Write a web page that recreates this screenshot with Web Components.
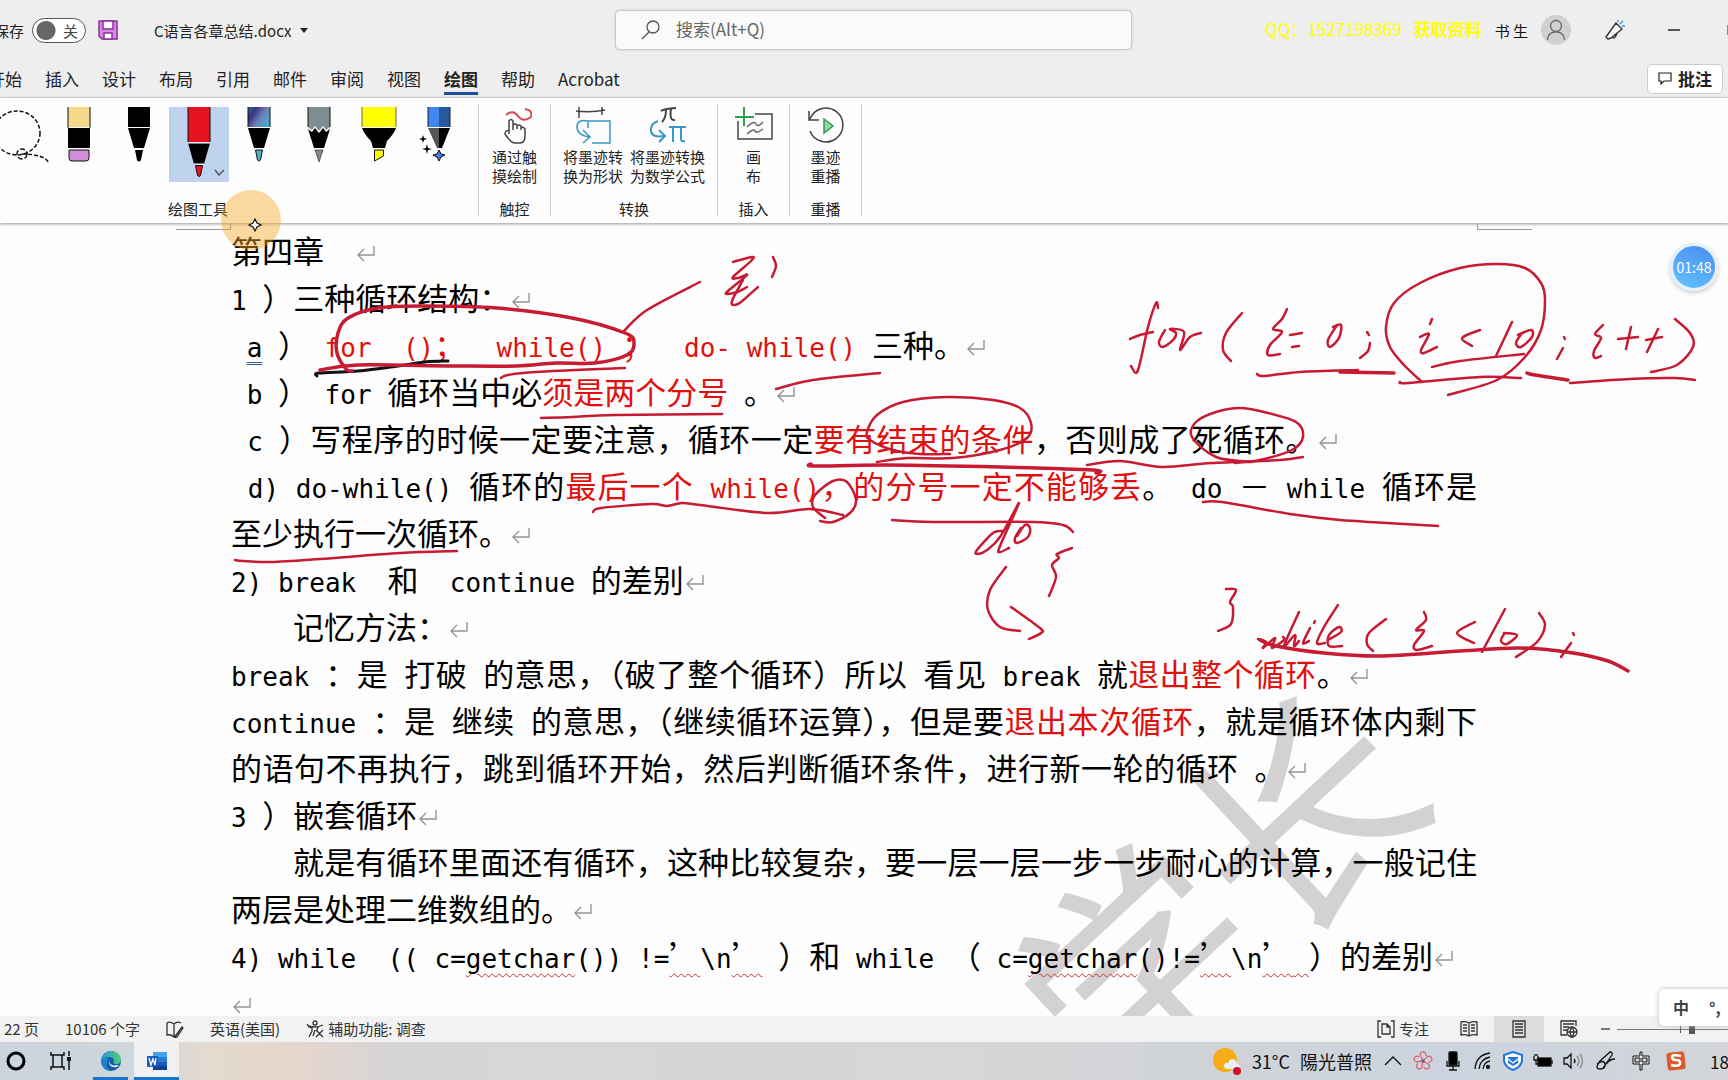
<!DOCTYPE html>
<html lang="zh-CN">
<head>
<meta charset="utf-8">
<title>C语言各章总结.docx</title>
<style>
  body {
    margin: 0;
    font-family: "Noto Sans CJK SC", sans-serif;
    font-size: 15px;
    color: #222;
    overflow: hidden;
  }
</style>
</head>
<body>
<word-app></word-app>

<script>
// small helper so every component gets an open shadow root the same way
class BaseElement extends HTMLElement {
  constructor() {
    super();
    this.attachShadow({ mode: 'open' });
    this.shadowRoot.innerHTML = this.template();
  }

  template() {
    return '';
  }
}

// top bar: autosave, file name, search, account
class TitleBar extends BaseElement {
  template() {
    return `
      <style>
        :host {
          display: grid;
          grid-template-columns: 615fr 517fr 596fr;
          align-items: center;
          height: 60px;
          flex: none;
          background: #eee;
        }
        .left, .right, .switch, .search { display: flex; align-items: center; }
        .left { margin-left: -6px; white-space: nowrap; }
        .switch { gap: 8px; }
        .switch input {
          appearance: none;
          margin: 0;
          width: 54px;
          height: 25px;
          border: 1px solid #555;
          border-radius: 13px;
          background: radial-gradient(circle at 13px 50%, #666 9px, transparent 10px) #fff;
        }
        .toggle { display: grid; align-items: center; }
        .toggle > * { grid-area: 1 / 1; }
        .toggle span { justify-self: end; padding-right: 8px; color: #444; }
        .save { margin: 0 36px 0 12px; }
        button { border: 0; padding: 0; background: none; font: inherit; color: inherit; display: flex; }
        .file { align-items: center; gap: 9px; font-size: 15px; }
        .search {
          box-sizing: border-box;
          height: 40px;
          padding-left: 25px;
          gap: 16px;
          border: 1px solid #ccc;
          border-radius: 5px;
          background: #fafafa;
          box-shadow: 0 0 2px #bbb;
        }
        .search input {
          flex: 1;
          min-width: 0;
          border: 0;
          padding: 0 0 4px;
          background: none;
          font: 17px "Noto Sans CJK SC", sans-serif;
        }
        .search input::placeholder { color: #666; }
        .right { justify-content: flex-end; white-space: nowrap; }
        .notice { color: #ff0; font-size: 17px; display: flex; gap: 12px; margin-right: 13px; padding-bottom: 3px; }
        .name { font-size: 15px; margin-right: 13px; color: #111; }
        .megaphone { margin: 0 43px 0 34px; }
        .min { margin-right: 47px; }
        .max { width: 1px; height: 10px; background: #888; }
      </style>
      <div class="left">
        <label class="switch">保存
          <span class="toggle"><input type="checkbox"><span>关</span></span>
        </label>
        <button class="save" aria-label="保存文档">
          <svg width="20" height="20" viewBox="0 0 20 20" fill="#d48be0" stroke="#8a2f9c" stroke-width="1.5">
            <path d="M1 1h18v18H4l-3-3z"/><path d="M5 1h10v8H5zM6 13h8v6H6z" fill="#fff"/>
          </svg>
        </button>
        <button class="file">C语言各章总结.docx
          <svg width="8" height="5"><path d="M0 0h8l-4 5z" fill="#222"/></svg>
        </button>
      </div>
      <label class="search">
        <svg width="19" height="20" viewBox="0 0 19 20" fill="none" stroke="#555" stroke-width="1.3">
          <circle cx="12" cy="7" r="6"/><path d="M8 12L1 19"/>
        </svg>
        <input type="search" placeholder="搜索(Alt+Q)" aria-label="搜索">
      </label>
      <div class="right">
        <div class="notice"><span>QQ：1527198369</span><b>获取资料</b></div>
        <span class="name">书 生</span>
        <svg width="30" height="30" viewBox="0 0 30 30" fill="none" stroke="#666" stroke-width="1.3">
          <circle cx="15" cy="15" r="15" fill="#d0d0d0" stroke="none"/>
          <circle cx="15" cy="11" r="5.5"/><path d="M6.500 25c0-11 17-11 17 0"/>
        </svg>
        <button class="megaphone" aria-label="即将推出">
          <svg width="20" height="20" viewBox="0 0 20 20" fill="#fff" stroke="#333" stroke-width="1.4" stroke-linejoin="round">
            <path d="M11 3l6 6-11 9-3 1-2-2zM7 17q3 3 5-4"/>
            <path d="M13 2V0M15 4l3-3M17 6h3" stroke="#2b9ccc"/>
          </svg>
        </button>
        <button class="min" aria-label="最小化"><svg width="12" height="2"><path d="M0 1h12" stroke="#222" stroke-width="1.500"/></svg></button>
        <span class="max"></span>
      </div>
    `;
  }
}

class RibbonTabs extends BaseElement {
  template() {
    const tabs = ['开始', '插入', '设计', '布局', '引用', '邮件', '审阅', '视图', '绘图', '帮助', 'Acrobat'];
    return `
      <style>
        :host {
          display: flex;
          justify-content: space-between;
          align-items: center;
          height: 37px;
          flex: none;
          padding-right: 5px;
          background: #eee;
          border-bottom: 1px solid #d4d4d4;
        }
        nav { display: flex; gap: 23px; margin-left: -12px; }
        nav button {
          border: 0;
          border-bottom: 3px solid transparent;
          padding: 3px 0 0;
          background: none;
          font: 17px/27px "Noto Sans CJK SC", sans-serif;
          color: #222;
        }
        nav button.active { font-weight: bold; border-bottom-color: #1f4e9a; }
        .comments {
          display: flex;
          align-items: center;
          gap: 6px;
          height: 30px;
          padding: 0 10px;
          border: 1px solid #ccc;
          border-radius: 5px;
          background: #fff;
          font: bold 17px "Noto Sans CJK SC", sans-serif;
          color: #222;
        }
      </style>
      <nav>${tabs.map(t => `<button class="${t === '绘图' ? 'active' : ''}">${t}</button>`).join('')}</nav>
      <button class="comments">
        <svg width="14" height="13" viewBox="0 0 14 13" fill="none" stroke="#222" stroke-width="1.2"><path d="M1 1h12v8H6l-3 3V9H1z"/></svg>
        批注
      </button>
    `;
  }
}

// one labelled block of the ribbon
class RibbonGroup extends BaseElement {
  template() {
    return `
      <style>
        :host {
          display: flex;
          flex-direction: column;
          justify-content: space-between;
          box-sizing: border-box;
          width: 72px;
          height: 112px;
          border-right: 1px solid #ccc;
          text-align: center;
        }
        :host([wide]) { width: 167px; }
        :host([pens]) { width: 561px; margin-left: -82px; }
        .content { display: flex; justify-content: center; gap: 7px; padding-top: 3px; }
        :host([pens]) .content { justify-content: flex-end; gap: 0; padding-right: 9px; }
        .label { font-size: 15px; line-height: 15px; }
      </style>
      <div class="content"><slot></slot></div>
      <div class="label"></div>
    `;
  }

  connectedCallback() {
    this.shadowRoot.querySelector('.label').textContent = this.getAttribute('label');
  }
}

class ToolButton extends BaseElement {
  template() {
    return `
      <style>
        :host { display: block; }
        button {
          display: flex;
          flex-direction: column;
          align-items: center;
          gap: 3px;
          border: 0;
          padding: 0;
          background: none;
          font: 15px/19px "Noto Sans CJK SC", sans-serif;
          color: #222;
        }
      </style>
      <button><slot name="icon"></slot><span><slot></slot></span></button>
    `;
  }
}

// pens are all drawn in a 60x75 cell
class PenTools extends BaseElement {
  template() {
    const pens = [
      ['套索', `<g fill="none" stroke="#111" stroke-width="1.500" stroke-dasharray="4 2"><ellipse cx="28" cy="26" rx="23" ry="22"/><path d="M33 47q22 0 27 9"/></g><circle cx="33" cy="47" r="5" fill="none" stroke="#111" stroke-width="1.500" stroke-dasharray="5 2"/>`],
      ['橡皮擦', `<path d="M19 0v20h22V0" fill="#f5d98b"/><path d="M19 21h22v20H19z"/><path d="M20 43h20v8q0 3-3 3H23q-3 0-3-3z" fill="#d08fd8" stroke="#111"/><path d="M19 0v21M41 0v21" stroke="#111"/>`],
      ['黑色笔', `<path d="M19 0h22v20H19zM19 21h22l-6 20H25zM26 43h8l-2 10q-2 3-4 0z"/>`],
      ['红色笔', `<path d="M19 0h22v35H19z" fill="#e51220"/><path d="M19 0v35M41 0v35" stroke="#111"/><path d="M19 36h22l-6 21H25z"/><path d="M19 36h22M25 57h10" stroke="#fff"/><path d="M26.500 58.500h7l-2 10q-1 2-3 0z" fill="#e51220" stroke="#111"/><path d="M46 63l4 5 5-5" fill="none" stroke="#555" stroke-width="1.500"/>`, 'on'],
      ['银河笔', `<defs><linearGradient id="g" x2="1" y2=".6"><stop stop-color="#2c6f96"/><stop offset=".3" stop-color="#3a3380"/><stop offset=".65" stop-color="#6d80b8"/><stop offset="1" stop-color="#4ba6ce"/></linearGradient></defs><path d="M19 0h22v20H19z" fill="url(#g)"/><path d="M19 0v20M41 0v20" stroke="#111"/><path d="M19 21h22l-6 20H25z"/><path d="M26.500 43h7l-2 10q-1 2-3 0z" fill="#4fb5bc" stroke="#111"/>`],
      ['铅笔', `<path d="M19 0h22v20l-4 3-3-4-4 5-4-5-3 4-4-3z" fill="#7f8e92"/><path d="M19 0v20M41 0v20" stroke="#111"/><path d="M19 22l4 3 3-4 4 5 4-5 3 4 4-3-6 19H25z"/><path d="M26 43h8l-4 12z" fill="#888" stroke="#222" stroke-width=".6"/>`],
      ['荧光笔', `<path d="M13 0h34v20H13z" fill="#ff0"/><path d="M13 0v20M47 0v20" stroke="#666"/><path d="M13 21h34q-2 6-9 13l-2 7H24l-2-7q-7-7-9-13z"/><path d="M25.500 43h9v6l-9 5z" fill="#ff0" stroke="#111"/>`],
      ['动作笔', `<path d="M19 0h11v20H19z" fill="#3f86f0"/><path d="M30 0h11v20H30z" fill="#2a589c"/><path d="M19 0v20M41 0v20" stroke="#222"/><path d="M19 21h11v20h-2z" fill="#555"/><path d="M30 21h11l-8 20h-3z"/><path d="M30 43l2 4 4 1-4 2-2 4-2-4-4-2 4-1z" fill="#3f7be0" stroke="#111"/><path d="M14 28l1 3 3 1-3 1-1 3-1-3-3-1 3-1zM18 37l1 4 4 1-4 1-1 4-1-4-4-1 4-1z"/>`]
    ];
    return `
      <style>
        :host { display: flex; }
        button { border: 0; padding: 0; width: 60px; height: 75px; background: none; }
        button.on { background: #c0d3ee; }
        svg { display: block; }
      </style>
      ${pens.map(p => `<button class="${p[2] || ''}" aria-label="${p[0]}"><svg width="60" height="75">${p[1]}</svg></button>`).join('')}
    `;
  }
}

class DrawRibbon extends BaseElement {
  template() {
    return `
      <style>
        :host {
          display: flex;
          flex: none;
          height: 119px;
          padding-top: 6px;
          background: #fdfdfd;
          box-shadow: 0 1px 3px #999;
          position: relative;
          z-index: 1;
        }
        svg { fill: none; stroke: #444; stroke-width: 1.500; }
      </style>
      <ribbon-group pens label="绘图工具"><pen-tools></pen-tools></ribbon-group>
      <ribbon-group label="触控">
        <tool-button>
          <svg slot="icon" width="36" height="37" viewBox="0 0 36 37">
            <path d="M10 8q7-6 12 1t13 1q2-7-6-8" stroke="#d8484e" stroke-width="2"/>
            <path d="M13 27V14q2-3 4 0v9-5q2-2 4 0v4-3q2-2 4 0v4-2q2-2 4 1v7q0 7-5 7h-5q-4 0-10-9 0-4 4-3z"/>
          </svg>通过触<br>摸绘制</tool-button>
      </ribbon-group>
      <ribbon-group wide label="转换">
        <tool-button>
          <svg slot="icon" width="36" height="37" viewBox="0 0 36 37">
            <path d="M1 4q15 2 29-1M4 0v11M27 0v8"/>
            <path d="M13 21V14h22v22H17M13 14Q2 12 2 20t12 10M8 23l7 7-7 6" stroke="#3798c8"/>
          </svg>将墨迹转<br>换为形状</tool-button>
        <tool-button>
          <svg slot="icon" width="38" height="37" viewBox="0 0 38 37">
            <path d="M12 4q2-2 15-3M17 3q0 8-4 12M22 2q-2 12 4 11" stroke-width="2"/>
            <path d="M9 14Q1 17 2 24t13 5M10 23l6 6-6 6M20 20h17M24 20v15M32 20v12q0 3 4 2" stroke="#3798c8" stroke-width="2"/>
          </svg>将墨迹转换<br>为数学公式</tool-button>
      </ribbon-group>
      <ribbon-group label="插入">
        <tool-button>
          <svg slot="icon" width="38" height="37" viewBox="0 0 38 37">
            <path d="M3 14v18h34V7H20"/><path d="M0 10h19M9 0v19" stroke="#2f9e4c" stroke-width="2"/>
            <path d="M12 20q7-7 9-3t7-2M12 27q7-6 8-3t8-2" stroke="#666"/>
          </svg>画<br>布</tool-button>
      </ribbon-group>
      <ribbon-group label="重播">
        <tool-button>
          <svg slot="icon" width="36" height="37" viewBox="0 0 36 37">
            <path d="M2 12a17 17 0 1 1 0 12M1 4v9h10"/><path d="M16 12l9 7-9 7z" fill="#8fdfa5" stroke="#339a55"/>
          </svg>墨迹<br>重播</tool-button>
      </ribbon-group>
    `;
  }
}

// paragraph mark at the end of a line
class ReturnMark extends BaseElement {
  template() {
    return `
      <style>:host { display: inline-block; white-space: normal; line-height: 1; } svg { display: block; }</style>
      <svg width="20" height="18" viewBox="0 0 20 18" fill="none" stroke="#949494" stroke-width="1.400">
        <path d="M19 1v9H3M9 4l-6 6 6 6"/>
      </svg>
    `;
  }
}

class DocPage extends BaseElement {
  template() {
    return `
      <style>
        :host {
          display: block;
          flex: 1;
          min-height: 0;
          overflow: hidden;
          position: relative;
          background: #fdfdfd;
        }
        article {
          position: relative;
          width: 1246px;
          margin-left: 231px;
          padding-top: 3px;
          color: #000;
        }
        article::before, article::after {
          content: "";
          position: absolute;
          top: 0;
          width: 54px;
          height: 6px;
          border-bottom: 1px solid #999;
        }
        article::before { right: 100%; border-right: 1px solid #999; }
        article::after { left: 100%; border-left: 1px solid #999; }
        p {
          margin: 0;
          height: 47px;
          font-size: 31px;
          line-height: 47px;
          white-space: pre-wrap;
        }
        p.full { text-align-last: justify; }
        p.first { text-indent: 2em; }
        code { font: 26px/1 "DejaVu Sans Mono", monospace; }
        em { font-style: normal; color: #e0100f; }
        .spell { text-decoration: underline wavy #c33 1px; text-underline-offset: 5px; }
        .grammar { text-decoration: underline double #2f62a8 1px; text-underline-offset: 5px; }
        .watermark {
          position: absolute;
          left: 1212px;
          top: 660px;
          width: 0;
          height: 0;
          display: flex;
          align-items: center;
          justify-content: center;
          font-size: 224px;
          line-height: 1;
          white-space: nowrap;
          color: #d4d1d3;
          transform: rotate(-43deg);
        }
      </style>
      <div class="watermark">学长</div>
      <article>
        <p>第四章<code>  </code><return-mark></return-mark></p>
        <p><code>1 </code>）三种循环结构：<return-mark></return-mark></p>
        <p><code> <span class="grammar">a</span> </code>）<em><code> for  ()</code>；<code>  while() </code>；<code>  do- while() </code></em>三种。<return-mark></return-mark></p>
        <p><code> b </code>）<code> for </code>循环当中必<em>须是两个分号</em><code> </code>。<return-mark></return-mark></p>
        <p class="full" style="padding-right: 140px"><code> c </code>）写程序的时候一定要注意，循环一定<em>要有结束的条件</em>，否则成了死循环。<return-mark></return-mark></p>
        <p class="full"><code> d) do-while() </code>循环的<em>最后一个<code> while()</code>，的分号一定不能够丢</em>。<code> do </code>－<code> while </code>循环是</p>
        <p>至少执行一次循环。<return-mark></return-mark></p>
        <p><code>2) break  </code>和<code>  continue </code>的差别<return-mark></return-mark></p>
        <p class="first">记忆方法：<return-mark></return-mark></p>
        <p class="full" style="padding-right: 109px"><code>break </code>：是<code> </code>打破<code> </code>的意思，（破了整个循环）所以<code> </code>看见<code> break </code>就<em>退出整个循环</em>。<return-mark></return-mark></p>
        <p class="full"><code>continue </code>：是<code> </code>继续<code> </code>的意思，（继续循环运算），但是要<em>退出本次循环</em>，就是循环体内剩下</p>
        <p class="full" style="padding-right: 171px">的语句不再执行，跳到循环开始，然后判断循环条件，进行新一轮的循环<code> </code>。<return-mark></return-mark></p>
        <p><code>3 </code>）嵌套循环<return-mark></return-mark></p>
        <p class="first full">就是有循环里面还有循环，这种比较复杂，要一层一层一步一步耐心的计算，一般记住</p>
        <p>两层是处理二维数组的。<return-mark></return-mark></p>
        <p><code>4) while  (( c=<span class="spell">getchar</span>()) !=</code><span class="spell">’</span><code>\\n</code><span class="spell">’</span><code> </code>）和<code> while </code>（<code> c=<span class="spell">getchar</span>()!=</code><span class="spell">’</span><code>\\n</code><span class="spell">’<code> </code></span>）的差别<return-mark></return-mark></p>
        <p><return-mark></return-mark></p>
      </article>
      <ink-layer></ink-layer>
    `;
  }
}

// hand drawn strokes over the page, each one is: width, then x,y points
class InkLayer extends BaseElement {
  template() {
    const strokes = [
      // circle and lines around for / while
      [3, 352,371, 346,369, 337,353, 338,333, 348,318, 378,308, 421,306, 497,308, 572,318, 625,333, 634,343, 627,355, 595,363, 556,363, 516,366, 453,366, 358,365, 320,370],
      [2, 501,378, 508,375, 536,372, 625,368],
      [2, 624,331, 647,310, 700,282],
      [2, 541,418, 572,417, 615,415, 722,414],
      [2, 776,389, 813,380, 880,373],
      // 到
      [2, 733,262, 752,257, 751,261, 733,277, 738,278, 747,275, 728,291, 727,294, 737,292, 747,287],
      [2, 743,280, 732,301, 734,305, 741,302, 758,287],
      [2, 773,257, 776,266, 772,277],
      // 结束的条件
      [2, 877,462, 907,458, 953,458, 1000,450, 1027,438, 1031,423, 1020,408, 993,400, 947,397, 903,402, 877,415, 867,432, 870,440, 893,450, 920,454, 950,454],
      [3, 811,464, 815,466, 887,465, 1000,467, 1093,470, 1096,473],
      [2, 1087,465, 1120,461, 1162,467, 1212,463, 1280,460, 1303,457],
      [2, 1252,462, 1216,457, 1192,437, 1196,422, 1216,412, 1240,408, 1264,412, 1296,422, 1303,437, 1292,450, 1260,460, 1235,463],
      [2, 593,512, 601,508, 651,504, 667,506, 682,503, 700,505, 767,513, 810,509, 843,515],
      [2, 825,518, 813,507, 815,495, 833,481, 847,482, 856,500, 850,513, 833,522, 820,521],
      [2, 892,520, 933,522, 1033,522, 1063,525, 1073,532],
      [2, 1203,502, 1222,502, 1290,514, 1340,520, 1438,526],
      [2, 235,560, 243,561, 271,562, 320,559, 400,553, 457,551],
      // do { }
      [2, 1002,531, 993,533, 977,550, 977,554, 987,550, 1000,537, 1019,503, 1000,546, 1000,552, 1009,548],
      [2, 1021,528, 1015,538, 1017,543, 1028,537, 1030,528, 1025,525, 1017,536],
      [2, 1006,567, 990,590, 988,610, 1000,627, 1020,631],
      [2, 1011,607, 1040,628, 1041,633, 1029,639],
      [2, 1072,548, 1057,554, 1059,558, 1052,565, 1056,577, 1049,596],
      [2, 1226,589, 1236,590, 1230,602, 1233,607, 1231,624, 1218,631],
      // for (
      [2, 1158,308, 1156,303, 1148,327, 1140,363, 1136,373, 1131,366],
      [2, 1130,339, 1140,335, 1153,332],
      [2, 1165,330, 1159,342, 1163,347, 1173,340, 1176,333, 1170,329, 1184,332, 1180,350, 1190,337, 1201,333],
      [2, 1242,313, 1226,333, 1223,350, 1231,361],
      // i = 0;
      [2, 1287,309, 1282,319, 1273,329, 1282,332, 1270,345, 1268,355, 1280,354],
      [2, 1290,335, 1302,333],
      [2, 1292,347, 1299,346],
      [2, 1337,325, 1328,340, 1330,347, 1339,338, 1341,325, 1333,327],
      [2, 1367,332, 1369,335],
      [2, 1370,343, 1368,351, 1360,358],
      [2, 1257,374, 1264,376, 1300,372, 1358,370],
      [3, 1340,372, 1394,373],
      // i < 10
      [2, 1448,395, 1497,380, 1525,357, 1541,330, 1545,300, 1541,283, 1525,268, 1497,264, 1460,268, 1420,283, 1394,303, 1386,327, 1390,347, 1404,365, 1422,382],
      [2, 1432,319, 1430,324],
      [2, 1420,337, 1429,334, 1421,350, 1424,353, 1437,347],
      [2, 1480,330, 1462,338, 1472,346],
      [2, 1512,322, 1505,337, 1496,356],
      [2, 1522,333, 1516,343, 1521,347, 1532,337, 1531,330, 1518,335],
      [2, 1432,367, 1460,361, 1524,354],
      [2, 1400,382, 1408,383, 1480,377, 1521,378],
      [3, 1527,373, 1535,375, 1568,380],
      // ; i++)
      [2, 1564,337, 1565,339],
      [2, 1563,348, 1557,359],
      [2, 1603,325, 1595,334, 1601,338, 1594,351, 1595,358, 1601,356],
      [2, 1618,339, 1638,337],
      [2, 1631,327, 1626,349],
      [2, 1646,340, 1662,337],
      [2, 1658,329, 1647,352],
      [2, 1675,319, 1690,333, 1693,347, 1677,365, 1651,372],
      [2, 1570,383, 1630,379, 1675,378, 1695,380],
      // while (i < 10);
      [2, 1258,639, 1266,642, 1263,648, 1275,638, 1272,648, 1284,640, 1283,637],
      [2, 1299,612, 1284,646, 1295,635, 1294,646, 1299,641],
      [2, 1310,628, 1303,643, 1309,641],
      [2, 1315,621, 1314,623],
      [2, 1338,605, 1324,627, 1317,643, 1325,643],
      [2, 1328,640, 1341,632, 1339,627, 1329,635, 1329,646, 1342,646],
      [2, 1386,619, 1369,633, 1367,644, 1373,651],
      [2, 1424,612, 1426,620, 1416,630, 1424,631, 1414,645, 1417,650, 1432,646],
      [2, 1475,622, 1457,633, 1474,643],
      [2, 1505,609, 1482,652],
      [2, 1504,634, 1501,641, 1507,644, 1517,635, 1504,633],
      [2, 1539,613, 1545,625, 1537,642, 1516,657],
      [2, 1573,633, 1574,635],
      [2, 1571,643, 1561,657],
      [3, 1260,640, 1276,646, 1324,653, 1380,656, 1460,651, 1520,648, 1573,653, 1608,661, 1628,671]
    ];
    const black = [3, 317,376, 319,373, 358,371, 398,366, 425,362, 448,361];
    return `
      <style>
        :host { position: absolute; left: 0; top: 0; pointer-events: none; }
        svg { display: block; fill: none; stroke: #c71a33; stroke-linecap: round; stroke-linejoin: round; }
      </style>
      <svg width="1728" height="793" viewBox="0 223 1728 793">
        <path d="${this.smooth(black)}" stroke="#111" stroke-width="3"/>
        ${strokes.map(s => `<path d="${this.smooth(s)}" stroke-width="${s[0] + 0.5}"/>`).join('')}
      </svg>
    `;
  }

  // run a curve through all the points
  smooth(stroke) {
    const pts = [];
    for (let i = 1; i < stroke.length; i += 2) {
      pts.push([stroke[i], stroke[i + 1]]);
    }
    let d = 'M' + pts[0].join(' ');
    for (let i = 0; i < pts.length - 1; i++) {
      const a = pts[i - 1] || pts[i];
      const b = pts[i];
      const c = pts[i + 1];
      const e = pts[i + 2] || c;
      d += `C${b[0] + (c[0] - a[0]) / 6} ${b[1] + (c[1] - a[1]) / 6} ${c[0] - (e[0] - b[0]) / 6} ${c[1] - (e[1] - b[1]) / 6} ${c[0]} ${c[1]}`;
    }
    return d;
  }
}

class StatusBar extends BaseElement {
  template() {
    return `
      <style>
        :host {
          display: flex;
          justify-content: space-between;
          flex: none;
          height: 26px;
          background: #f2f2f2;
          line-height: 26px;
          color: #333;
        }
        div { display: flex; align-items: center; white-space: nowrap; }
        .left { padding-left: 4px; gap: 26px; }
        button {
          display: flex;
          align-items: center;
          justify-content: center;
          gap: 4px;
          height: 26px;
          border: 0;
          padding: 0;
          background: none;
          font: inherit;
          color: inherit;
        }
        .view { width: 50px; }
        .focus { margin-right: 15px; }
        .on { background: #dcdcdc; }
        .minus { width: 23px; }
        svg { fill: none; stroke: #333; stroke-width: 1.300; }
        input {
          appearance: none;
          width: 111px;
          height: 26px;
          margin: 0;
          background:
            linear-gradient(#555, #555) 63px 50% / 1px 7px no-repeat,
            linear-gradient(#777, #777) 0 50% / 100% 1px no-repeat;
        }
        input::-webkit-slider-thumb { appearance: none; width: 6px; height: 10px; background: #555; }
      </style>
      <div class="left">
        <span>22 页</span>
        <span>10106 个字</span>
        <svg width="18" height="17" viewBox="0 0 18 17"><path d="M8 3q-4-3-7-1v12q4-1 7 2V3q3-3 7-1M8 16q2-2 3-2M16 6l-6 9M17 7l-6 9-2 1 1-3 6-8z"/></svg>
        <span>英语(美国)</span>
        <button><svg width="18" height="18" viewBox="0 0 18 18"><circle cx="9" cy="3" r="2"/><path d="M1 5q8 4 16 0M6 7v4l-3 6M12 7l-1 3M9 10l-2 6M10 10l7 7M17 10l-7 7M1 4l2 3 3 1"/></svg>辅助功能: 调查</button>
      </div>
      <div>
        <button class="focus"><svg width="18" height="18" viewBox="0 0 18 18"><path d="M4 1H1v16h3M14 1h3v16h-3M5 4h5l3 3v7H5zM10 4v3h3"/></svg>专注</button>
        <button class="view" aria-label="阅读视图"><svg width="18" height="16" viewBox="0 0 18 16"><path d="M9 2Q5 0 1 1v13q4-1 8 1 4-2 8-1V1q-4-1-8 1v13M3 4h4M3 7h4M3 10h4M11 4h4M11 7h4M11 10h4"/></svg></button>
        <button class="view on" aria-label="页面视图"><svg width="14" height="18" viewBox="0 0 14 18"><path d="M1 1h12v16H1zM3 4h8M3 7h8M3 10h8M3 13h8"/></svg></button>
        <button class="view" aria-label="Web 版式视图"><svg width="18" height="18" viewBox="0 0 18 18"><path d="M7 15H1V1h15v5M3 4h11M3 7h6M3 10h4"/><circle cx="12" cy="12" r="5"/><path d="M7 12h10M12 7q-4 5 0 10 4-5 0-10"/></svg></button>
        <button class="minus" aria-label="缩小"><svg width="9" height="2"><path d="M0 1h9"/></svg></button>
        <input type="range" min="0" max="100" value="69" aria-label="缩放">
      </div>
    `;
  }
}

class TaskBar extends BaseElement {
  template() {
    const tray = [
      ['显示隐藏的图标', '<path d="M2 14l8-8 8 8"/>'],
      ['录屏', '<g stroke="#e0646c"><path d="M10 9q-5-6-1-8 4-1 4 4"/><path d="M10 9q-5-6-1-8 4-1 4 4" transform="rotate(72 10 10)"/><path d="M10 9q-5-6-1-8 4-1 4 4" transform="rotate(144 10 10)"/><path d="M10 9q-5-6-1-8 4-1 4 4" transform="rotate(216 10 10)"/><path d="M10 9q-5-6-1-8 4-1 4 4" transform="rotate(288 10 10)"/></g><circle cx="10" cy="10" r="1" stroke="#55a"/>'],
      ['麦克风', '<rect x="6" y="1" width="8" height="13" rx="1" fill="#000"/><path d="M4 10v5h12v-5M10 15v4M6 19h8"/>'],
      ['网络', '<path d="M2 18Q3 4 17 2M6 18Q7 8 17 6M10 18q1-7 7-8"/><circle cx="15" cy="16" r="1.500" fill="#111"/>'],
      ['安全', '<path d="M10 1l9 3v6q-1 6-9 9-8-3-9-9V4z" fill="#fff" stroke="#2377d8" stroke-width="2"/><path d="M5 6h10v6l-5 3-5-3z" fill="#2377d8" stroke="none"/><path d="M5 8l5 4 5-4" stroke="#fff"/>'],
      ['电池', '<rect x="5" y="7" width="13" height="8" fill="#000"/><path d="M19 9v4M1 5v4h4V5M3 9v4h2M2 3v2M4 3v2"/>'],
      ['音量', '<path d="M1 7h3l4-4v14l-4-4H1zM11 8q2 2 0 4"/><path d="M14 5q4 5 0 10M17 3q5 7 0 14" stroke="#888"/>'],
      ['手写', '<path d="M1 13q7-5 8 0t-5 5 0-8L14 1q3 0 2 3L7 17M10 13q4-5 9-5"/>', 'wide'],
      ['输入法', '<path d="M2 5h7V1h2v4h7v8h-7v6H9v-6H2zM4 7h5v4H4zM11 7h5v4h-5z" fill="#eee" fill-rule="evenodd" stroke-width="1"/>', 'wide'],
      ['搜狗输入法', '<rect x="1" y="1" width="18" height="18" rx="3" fill="#dd5a2c" stroke="none" transform="rotate(-6 10 10)"/><path d="M15 5q-9-2-9 1 0 3 4 3 5 0 4 4-2 3-9 1" stroke="#fff" stroke-width="2.500"/>', 'wide']
    ];
    return `
      <style>
        :host {
          display: flex;
          justify-content: space-between;
          flex: none;
          height: 38px;
          background: linear-gradient(90deg, #cbd4dd 0, #cfd6dc 8%, #e4dad0 12%, #e5d6cc 17%, #d8d5d5 22%, #d6d6d8 60%, #cfd3d7 70%, #cbd4df 84%, #d3d5d8);
          color: #111;
        }
        div { display: flex; align-items: center; white-space: nowrap; }
        button {
          box-sizing: border-box;
          display: flex;
          align-items: center;
          justify-content: center;
          height: 38px;
          border: 0;
          padding: 0;
          background: none;
        }
        .start { width: 32px; margin-right: 12px; }
        .tasks { width: 34px; margin-right: 15px; }
        .edge { width: 35px; margin-right: 6px; border-bottom: 3px solid #1874c8; border-top: 3px solid transparent; }
        .word { width: 45px; background: #f0f0f0; border-bottom: 3px solid #1874c8; border-top: 3px solid #f0f0f0; }
        .weather { font-size: 18px; gap: 10px; margin-right: 6px; }
        .tray button { width: 30px; }
        .tray button.wide { width: 35px; }
        .tray svg { fill: none; stroke: #111; stroke-width: 1.300; }
        .clock { width: 18px; margin-left: 17px; font-size: 17px; }
      </style>
      <div>
        <button class="start" aria-label="Cortana"><svg width="20" height="20"><circle cx="10" cy="10" r="8" fill="none" stroke="#000" stroke-width="3"/></svg></button>
        <button class="tasks" aria-label="任务视图"><svg width="22" height="20" viewBox="0 0 22 20" fill="none" stroke="#111" stroke-width="1.500"><path d="M1 1v3h13V1M1 19v-3h13v3M3 4v12M12 4v12M19 0v5M19 10v9"/><path d="M17 6h4v4h-4z" fill="#111" stroke="none"/></svg></button>
        <button class="edge" aria-label="Edge">
          <svg width="20" height="20" viewBox="0 0 20 20">
            <defs><linearGradient id="e" x2="1" y2="0"><stop stop-color="#1c9ad8"/><stop offset="1" stop-color="#55cf72"/></linearGradient></defs>
            <circle cx="10" cy="10" r="10" fill="#155ca8"/>
            <path d="M0 9Q2 0 10 0q10 1 10 9-1 5-6 4-3-1-1-3 0-4-5-4-6 0-8 5z" fill="url(#e)"/>
            <path d="M8 7q-6 9 3 13-10 0-11-10 2-4 8-3z" fill="#1b86ce"/>
            <path d="M9 8q-3 8 9 6l-2 2Q8 17 8 11z" fill="#eef3f6"/>
          </svg>
        </button>
        <button class="word" aria-label="Word">
          <svg width="20" height="20" viewBox="0 0 20 20">
            <path d="M6 1h14v5H6z" fill="#41a5ee"/><path d="M6 6h14v5H6z" fill="#2b7cd3"/><path d="M6 11h14v4H6z" fill="#185abd"/><path d="M6 15h14v4H6z" fill="#103f91"/>
            <rect y="5" width="11" height="11" rx="1" fill="#185abd"/>
            <path d="M2 7l2 7 2-6 2 6 1-7" fill="none" stroke="#fff" stroke-width="1.300"/>
          </svg>
        </button>
      </div>
      <div>
        <div class="weather">
          <svg width="29" height="29" viewBox="0 0 29 29"><circle cx="12" cy="13" r="12" fill="#f8ac18"/><path d="M14 22q-4-1-3-4 1-3 4-2 2-6 7-3 2 1 2 4 4 1 2 5z" fill="#e8f0fa"/><circle cx="24" cy="24" r="4" fill="#d0132b"/></svg>
          <span>31°C</span><span>陽光普照</span>
        </div>
        <div class="tray">
          ${tray.map(t => `<button class="${t[2] || ''}" aria-label="${t[0]}"><svg width="20" height="20">${t[1]}</svg></button>`).join('')}
        </div>
        <span class="clock">18</span>
      </div>
    `;
  }
}

// whole window, plus the things that float over it
class WordApp extends BaseElement {
  template() {
    return `
      <style>
        :host { display: flex; flex-direction: column; height: 100vh; overflow: hidden; position: relative; }
        .pointer { position: absolute; left: 221px; top: 190px; z-index: 2; }
        .timer {
          position: absolute;
          right: 10px;
          top: 243px;
          width: 42px;
          height: 42px;
          border: 3px solid #e4f1fc;
          border-radius: 50%;
          background: linear-gradient(25deg, #62c4ff, #4a8bf0);
          box-shadow: 0 2px 4px #ccc;
          color: #fff;
          font-size: 14px;
          line-height: 42px;
          text-align: center;
        }
        .ime {
          position: absolute;
          right: -6px;
          bottom: 54px;
          z-index: 2;
          display: flex;
          gap: 20px;
          width: 61px;
          height: 37px;
          padding-left: 14px;
          border-radius: 5px;
          background: #fff;
          box-shadow: 0 0 5px #bbb;
          font-size: 16px;
          line-height: 37px;
          font-weight: bold;
          white-space: nowrap;
          color: #444;
        }
      </style>
      <title-bar></title-bar>
      <ribbon-tabs></ribbon-tabs>
      <draw-ribbon></draw-ribbon>
      <doc-page></doc-page>
      <status-bar></status-bar>
      <task-bar></task-bar>
      <svg class="pointer" width="60" height="60">
        <circle cx="30" cy="30" r="30" fill="#f5a623" fill-opacity=".43"/>
        <path d="M34 29l2 4 4 2-4 2-2 4-2-4-4-2 4-2z" fill="#fff" stroke="#111" stroke-width="1.200"/>
      </svg>
      <div class="timer">01:48</div>
      <div class="ime"><span>中</span><span>°,</span></div>
    `;
  }
}

customElements.define('return-mark', ReturnMark);
customElements.define('ink-layer', InkLayer);
customElements.define('pen-tools', PenTools);
customElements.define('tool-button', ToolButton);
customElements.define('ribbon-group', RibbonGroup);
customElements.define('title-bar', TitleBar);
customElements.define('ribbon-tabs', RibbonTabs);
customElements.define('draw-ribbon', DrawRibbon);
customElements.define('doc-page', DocPage);
customElements.define('status-bar', StatusBar);
customElements.define('task-bar', TaskBar);
customElements.define('word-app', WordApp);
</script>
</body>
</html>
